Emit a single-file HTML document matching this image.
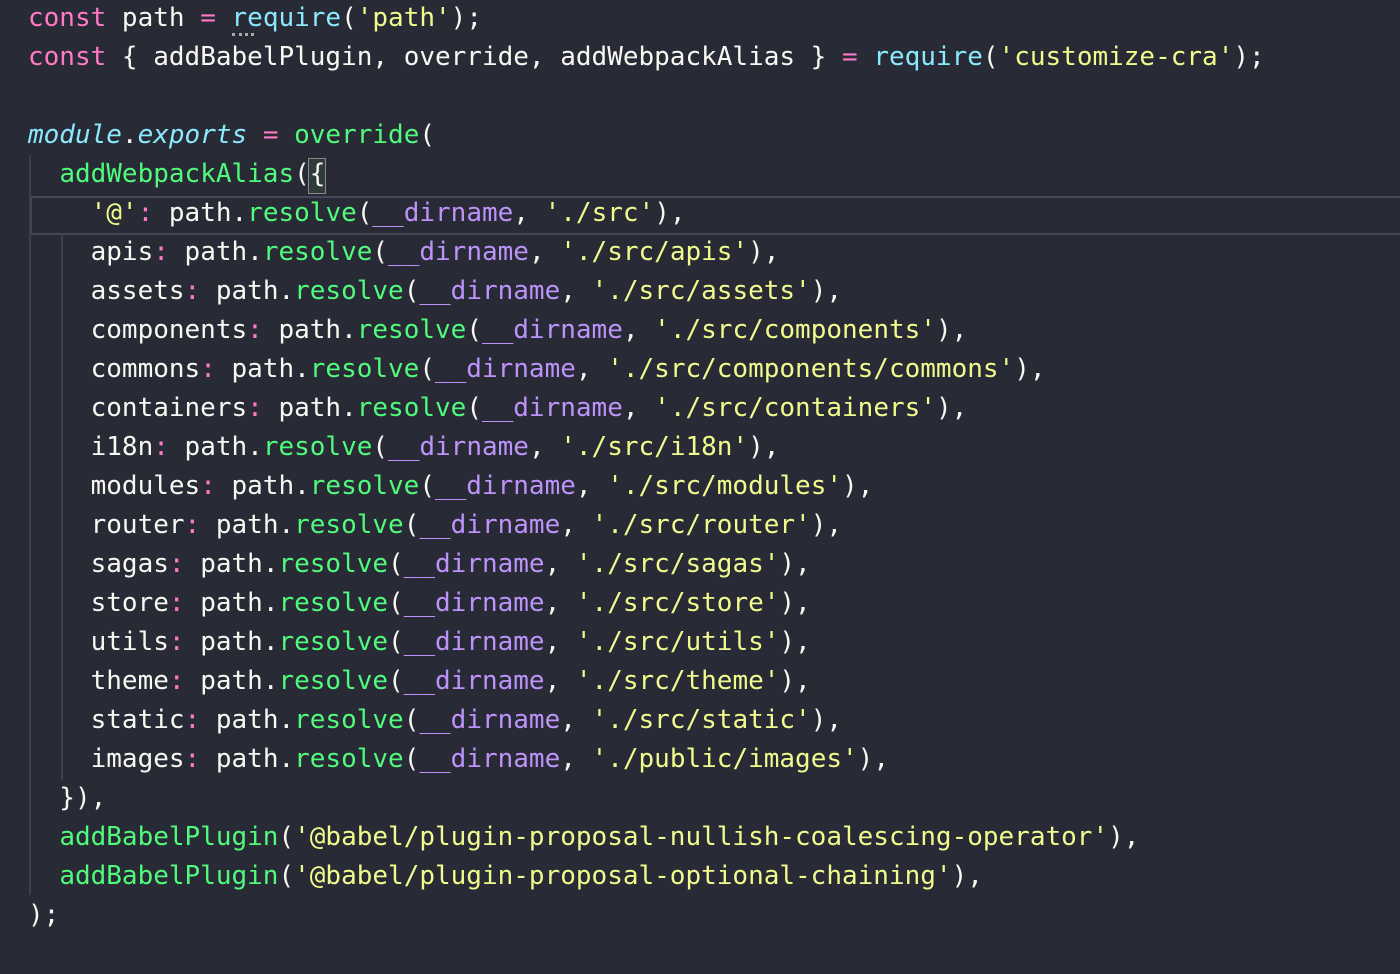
<!DOCTYPE html>
<html><head><meta charset="utf-8"><style>
html,body{margin:0;padding:0;background:#282a36;width:1400px;height:974px;overflow:hidden}
#c{position:absolute;left:28px;top:-1.5px;font-family:"DejaVu Sans Mono","Liberation Mono",monospace;font-size:26px;line-height:39px;color:#f8f8f2;white-space:pre}
.k{color:#ff79c6}.g{color:#50fa7b}.y{color:#f1fa8c}.c{color:#8be9fd}.p{color:#bd93f9}.i{font-style:italic}
.hl{position:absolute;left:30px;right:0;top:196px;height:35px;border:2px solid #44475a;border-right:none}
.gd{position:absolute;width:2px;background:#3c3f4f}
.cur{position:absolute;left:308px;top:158px;width:16px;height:34px;border:1px solid #888;background:#2f3a3a}
.dots{position:absolute;left:232px;top:33px;width:22px;border-top:3px dotted #aaa}
</style></head><body>
<div class="hl"></div>
<div class="gd" style="left:29px;top:155px;height:740px"></div>
<div class="gd" style="left:61px;top:233px;height:547px"></div>
<div class="cur"></div>
<div class="dots"></div>
<div id="c"><span class="k">const</span> path <span class="k">=</span> <span class="c">require</span>(<span class="y">'path'</span>);
<span class="k">const</span> { addBabelPlugin, override, addWebpackAlias } <span class="k">=</span> <span class="c">require</span>(<span class="y">'customize-cra'</span>);

<span class="c i">module</span>.<span class="c i">exports</span> <span class="k">=</span> <span class="g">override</span>(
  <span class="g">addWebpackAlias</span>({
    <span class="y">'@'</span><span class="k">:</span> path.<span class="g">resolve</span>(<span class="p">__dirname</span>, <span class="y">'./src'</span>),
    apis<span class="k">:</span> path.<span class="g">resolve</span>(<span class="p">__dirname</span>, <span class="y">'./src/apis'</span>),
    assets<span class="k">:</span> path.<span class="g">resolve</span>(<span class="p">__dirname</span>, <span class="y">'./src/assets'</span>),
    components<span class="k">:</span> path.<span class="g">resolve</span>(<span class="p">__dirname</span>, <span class="y">'./src/components'</span>),
    commons<span class="k">:</span> path.<span class="g">resolve</span>(<span class="p">__dirname</span>, <span class="y">'./src/components/commons'</span>),
    containers<span class="k">:</span> path.<span class="g">resolve</span>(<span class="p">__dirname</span>, <span class="y">'./src/containers'</span>),
    i18n<span class="k">:</span> path.<span class="g">resolve</span>(<span class="p">__dirname</span>, <span class="y">'./src/i18n'</span>),
    modules<span class="k">:</span> path.<span class="g">resolve</span>(<span class="p">__dirname</span>, <span class="y">'./src/modules'</span>),
    router<span class="k">:</span> path.<span class="g">resolve</span>(<span class="p">__dirname</span>, <span class="y">'./src/router'</span>),
    sagas<span class="k">:</span> path.<span class="g">resolve</span>(<span class="p">__dirname</span>, <span class="y">'./src/sagas'</span>),
    store<span class="k">:</span> path.<span class="g">resolve</span>(<span class="p">__dirname</span>, <span class="y">'./src/store'</span>),
    utils<span class="k">:</span> path.<span class="g">resolve</span>(<span class="p">__dirname</span>, <span class="y">'./src/utils'</span>),
    theme<span class="k">:</span> path.<span class="g">resolve</span>(<span class="p">__dirname</span>, <span class="y">'./src/theme'</span>),
    static<span class="k">:</span> path.<span class="g">resolve</span>(<span class="p">__dirname</span>, <span class="y">'./src/static'</span>),
    images<span class="k">:</span> path.<span class="g">resolve</span>(<span class="p">__dirname</span>, <span class="y">'./public/images'</span>),
  }),
  <span class="g">addBabelPlugin</span>(<span class="y">'@babel/plugin-proposal-nullish-coalescing-operator'</span>),
  <span class="g">addBabelPlugin</span>(<span class="y">'@babel/plugin-proposal-optional-chaining'</span>),
);</div>
</body></html>
